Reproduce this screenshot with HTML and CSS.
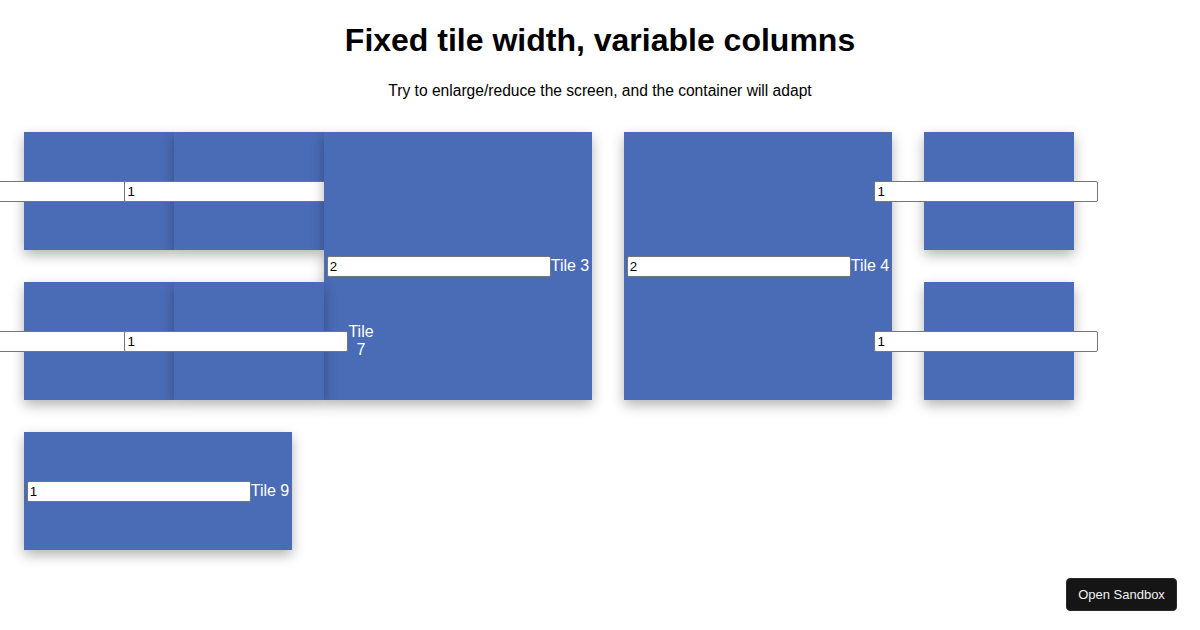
FILE: index.html
```html
<!DOCTYPE html>
<html lang="en">
<head>
<meta charset="utf-8">
<title>Fixed tile width, variable columns</title>
<link rel="stylesheet" href="styles.css">
</head>
<body>
<h1 class="title">Fixed tile width, variable columns</h1>
<p class="subtitle">Try to enlarge/reduce the screen, and the container will adapt</p>
<div class="grid">
  <div class="tile"><input class="span-input" type="text" value="1">Tile 1</div>
  <div class="tile"><input class="span-input" type="text" value="1">Tile 2</div>
  <div class="tile tile-big"><input class="span-input" type="text" value="2">Tile 3</div>
  <div class="tile tile-big"><input class="span-input" type="text" value="2">Tile 4</div>
  <div class="tile"><input class="span-input" type="text" value="1">Tile 5</div>
  <div class="tile"><input class="span-input" type="text" value="1">Tile 6</div>
  <div class="tile"><input class="span-input" type="text" value="1">Tile 7</div>
  <div class="tile"><input class="span-input" type="text" value="1">Tile 8</div>
  <div class="tile tile-wide"><input class="span-input" type="text" value="1">Tile 9</div>
</div>
<a class="sandbox-btn" href="#">Open Sandbox</a>
</body>
</html>
```
FILE: styles.css
```css
html, body {
  margin: 0;
  padding: 0;
  background: #ffffff;
}

body {
  font-family: "Liberation Sans", Arial, sans-serif;
  color: #000;
  min-height: 630px;
}

.title {
  margin: 22px 0 0;
  font-size: 32px;
  font-weight: bold;
  text-align: center;
}

.subtitle {
  margin: 23px 0 0;
  font-size: 15.6px;
  text-align: center;
}

.grid {
  display: grid;
  grid-template-columns: repeat(7, 118px);
  grid-auto-rows: 118px;
  gap: 32px;
  padding: 0 24px 40px;
  margin-top: 32px;
}

.tile {
  min-width: 150px;
  display: flex;
  align-items: center;
  justify-content: center;
  text-align: center;
  background: #4a6bb6;
  color: #ffffff;
  font-size: 16px;
  box-shadow: 0 5px 12px rgba(0, 0, 0, 0.3);
}

.tile-big {
  grid-column: span 2;
  grid-row: span 2;
}

.tile-wide {
  grid-column: span 2;
}

.span-input {
  flex: none;
  box-sizing: border-box;
  width: 224px;
  height: 21px;
  margin: 0;
  padding: 1px 2px;
  border: 1px solid #767676;
  border-radius: 2px;
  background: #fff;
  font-family: "Liberation Sans", Arial, sans-serif;
  font-size: 13.333px;
  color: #000;
}

.sandbox-btn {
  position: fixed;
  right: 23px;
  bottom: 19px;
  width: 111px;
  height: 33px;
  display: flex;
  align-items: center;
  justify-content: center;
  box-sizing: border-box;
  background: #151515;
  border: 1px solid #2a2a2a;
  border-radius: 4px;
  color: #f2f2f2;
  font-family: "Liberation Sans", Arial, sans-serif;
  font-size: 13px;
  text-decoration: none;
}
```
